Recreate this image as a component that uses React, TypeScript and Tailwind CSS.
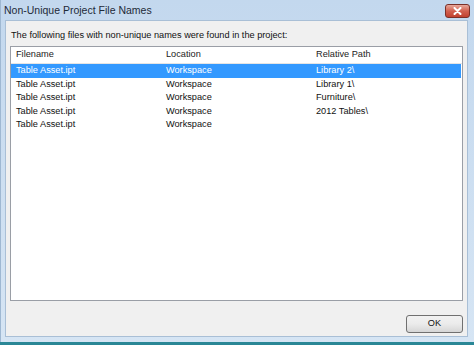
import React from "react";

const rows = [
  ["Table Asset.ipt", "Workspace", "Library 2\\"],
  ["Table Asset.ipt", "Workspace", "Library 1\\"],
  ["Table Asset.ipt", "Workspace", "Furniture\\"],
  ["Table Asset.ipt", "Workspace", "2012 Tables\\"],
  ["Table Asset.ipt", "Workspace", ""],
];

export default function App() {
  return (
    <div
      className="w-[474px] h-[345px] flex flex-col bg-[#2a8796] overflow-hidden"
      style={{ fontFamily: '"Liberation Sans", Arial, sans-serif' }}
    >
      <div className="flex-1 flex flex-col bg-gradient-to-b from-[#c3d8ee] to-[#d6e5f4] border-l border-[#9fb8d2]">
        {/* title bar */}
        <div className="h-[20px] flex items-center justify-between pl-[3px] pr-[4px]">
          <span className="text-[10.5px] text-[#1e2a38] leading-none pt-[1px]">
            Non-Unique Project File Names
          </span>
          <div className="w-[25px] h-[14px] mt-[1px] rounded-[3px] border border-[#7a3028] bg-gradient-to-b from-[#e6a89c] via-[#d2604f] to-[#c1412f] flex items-center justify-center">
            <svg width="9" height="8" viewBox="0 0 9 8">
              <path d="M1.5 1 L7.5 7 M7.5 1 L1.5 7" stroke="#ffffff" strokeWidth="2" strokeLinecap="round" />
            </svg>
          </div>
        </div>
        {/* client */}
        <div className="flex-1 ml-[4px] mr-[6px] bg-[#f0f0f0] border border-[#a9bfd6] flex flex-col pl-[4px] pr-[4px]">
          <div className="text-[9.2px] text-[#111] leading-none pt-[10px] pl-[1px] h-[25px]">
            The following files with non-unique names were found in the project:
          </div>
          <div className="h-[255px] bg-white border border-[#9a9ea6] flex flex-col">
            <div className="h-[17px] flex items-center text-[9.2px] text-[#222] border-b border-[#e5e5e5] shrink-0">
              <div className="w-[150px] pl-[5px]">Filename</div>
              <div className="w-[150px] pl-[5px]">Location</div>
              <div className="pl-[5px]">Relative Path</div>
            </div>
            <div className="flex flex-col mr-[1px]">
              {rows.map((r, i) => (
                <div
                  key={i}
                  className={
                    "h-[13.5px] flex items-center text-[9.2px] leading-none " +
                    (i === 0 ? "bg-[#3399ff] text-white" : "text-[#111]")
                  }
                >
                  <div className="w-[150px] pl-[5px]">{r[0]}</div>
                  <div className="w-[150px] pl-[5px]">{r[1]}</div>
                  <div className="pl-[5px]">{r[2]}</div>
                </div>
              ))}
            </div>
          </div>
          <div className="flex justify-end pt-[14px]">
            <button className="w-[57px] h-[18px] rounded-[3px] border border-[#707070] bg-gradient-to-b from-[#f2f2f2] via-[#ebebeb] to-[#d6d6d6] text-[9.2px] text-[#111] leading-none">
              OK
            </button>
          </div>
        </div>
        <div className="h-[5px]" />
      </div>
      <div className="h-[3px] bg-[#2a8796]" />
    </div>
  );
}
